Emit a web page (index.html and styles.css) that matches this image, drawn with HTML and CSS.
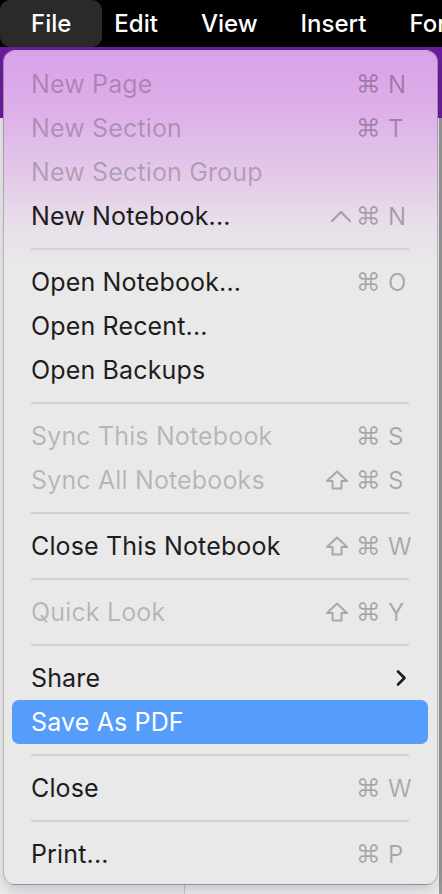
FILE: index.html
```html
<!DOCTYPE html>
<html lang="en">
<head>
  <meta charset="UTF-8" />
  <meta name="viewport" content="width=device-width, initial-scale=1.0" />
  <title>File menu</title>
  <link rel="stylesheet" href="styles.css">
</head>
<body>
  <nav class="menubar">
    <span class="menubar-item active">File</span>
    <span class="menubar-item">Edit</span>
    <span class="menubar-item">View</span>
    <span class="menubar-item">Insert</span>
    <span class="menubar-item">Format</span>
  </nav>

  <main class="app">
    <div class="ribbon"></div>
    <div class="content">
      <div class="pane-left"></div>
      <div class="pane-right"></div>
    </div>

    <ul class="menu">
      <li class="item disabled"><span class="label">New Page</span><span class="keys"><span class="mods">⌘</span><span class="key">N</span></span></li>
      <li class="item disabled"><span class="label">New Section</span><span class="keys"><span class="mods">⌘</span><span class="key">T</span></span></li>
      <li class="item disabled"><span class="label">New Section Group</span></li>
      <li class="item"><span class="label">New Notebook...</span><span class="keys"><span class="mods">
        <svg class="ctrl" width="22" height="14" viewBox="0 0 22 14"><path d="M2 12 L11 3 L20 12" fill="none" stroke="currentColor" stroke-width="2.2" stroke-linecap="round" stroke-linejoin="round"/></svg>⌘</span><span class="key">N</span></span></li>
      <li class="sep"></li>
      <li class="item"><span class="label">Open Notebook...</span><span class="keys"><span class="mods">⌘</span><span class="key">O</span></span></li>
      <li class="item"><span class="label">Open Recent...</span></li>
      <li class="item"><span class="label">Open Backups</span></li>
      <li class="sep"></li>
      <li class="item disabled"><span class="label">Sync This Notebook</span><span class="keys"><span class="mods">⌘</span><span class="key">S</span></span></li>
      <li class="item disabled"><span class="label">Sync All Notebooks</span><span class="keys"><span class="mods">
        <svg class="shift" width="22" height="20" viewBox="0 0 22 20"><path d="M11 1.5 L21 11 H15.5 V18.5 H6.5 V11 H1 Z" fill="none" stroke="currentColor" stroke-width="2" stroke-linejoin="round"/></svg>⌘</span><span class="key">S</span></span></li>
      <li class="sep"></li>
      <li class="item"><span class="label">Close This Notebook</span><span class="keys"><span class="mods">
        <svg class="shift" width="22" height="20" viewBox="0 0 22 20"><path d="M11 1.5 L21 11 H15.5 V18.5 H6.5 V11 H1 Z" fill="none" stroke="currentColor" stroke-width="2" stroke-linejoin="round"/></svg>⌘</span><span class="key">W</span></span></li>
      <li class="sep"></li>
      <li class="item disabled"><span class="label">Quick Look</span><span class="keys"><span class="mods">
        <svg class="shift" width="22" height="20" viewBox="0 0 22 20"><path d="M11 1.5 L21 11 H15.5 V18.5 H6.5 V11 H1 Z" fill="none" stroke="currentColor" stroke-width="2" stroke-linejoin="round"/></svg>⌘</span><span class="key">Y</span></span></li>
      <li class="sep"></li>
      <li class="item"><span class="label">Share</span>
        <svg class="chevron" width="14" height="18" viewBox="0 0 14 18"><path d="M4 2.5 L10.5 9 L4 15.5" fill="none" stroke="#1d1d1d" stroke-width="2.6" stroke-linecap="round" stroke-linejoin="round"/></svg>
      </li>
      <li class="item selected"><span class="label">Save As PDF</span></li>
      <li class="sep"></li>
      <li class="item"><span class="label">Close</span><span class="keys"><span class="mods">⌘</span><span class="key">W</span></span></li>
      <li class="sep"></li>
      <li class="item"><span class="label">Print...</span><span class="keys"><span class="mods">⌘</span><span class="key">P</span></span></li>
    </ul>
  </main>
</body>
</html>
```

FILE: styles.css
```css
* {
  box-sizing: border-box;
}

body {
  margin: 0;
  height: 894px;
  overflow: hidden;
  font-family: Inter, 'Noto Sans', sans-serif;
  background-color: #ececec;
}

/* top menu bar */
.menubar {
  height: 47px;
  background-color: #000;
  display: flex;
  align-items: stretch;
  white-space: nowrap;
  overflow: hidden;
}

.menubar-item {
  display: flex;
  align-items: center;
  padding: 0 21.5px;
  color: #fff;
  font-size: 24px;
  font-weight: 500;
}

.menubar-item.active {
  padding: 0 31px;
  margin-right: -9.5px;
  background-color: #2a2a2a;
  border-radius: 10px;
}

/* app behind the menu */
.app {
  position: relative;
  height: 847px;
}

.ribbon {
  height: 71px;
  background-color: #6c1d9e;
}

.content {
  display: flex;
  height: 776px;
}

.pane-left {
  width: 185px;
  border-right: 1px solid #c9c9c9;
  background-color: #efefef;
}

.pane-right {
  flex: 1;
  border-right: 3px solid #9a9a9a;
  background-color: #f1f1f1;
}

/* dropdown menu */
.menu {
  position: absolute;
  top: 3px;
  left: 3px;
  width: 435px;
  margin: 0;
  padding: 11px 0 8px;
  list-style: none;
  border-radius: 12px;
  border: 1px solid rgba(0, 0, 0, 0.22);
  background: linear-gradient(180deg, #daa1ea 0px, #ddb0e8 60px, #e3cae8 125px, #e8dfea 175px, #e9e9e9 220px);
  box-shadow: 0 6px 16px rgba(0, 0, 0, 0.18);
}

.item {
  display: flex;
  align-items: center;
  height: 44px;
  margin: 0 9px 0 8px;
  padding: 0 17px 0 19px;
  border-radius: 7px;
  font-size: 25px;
  letter-spacing: 0.15px;
  color: #1d1d1d;
}

.item .label {
  flex: 1;
}

.item.disabled {
  color: rgba(0, 0, 0, 0.23);
}

.item.selected {
  background-color: #569cfb;
  color: #fff;
}

.keys {
  display: flex;
  align-items: center;
  color: rgba(0, 0, 0, 0.28);
}

.mods {
  display: flex;
  align-items: center;
  gap: 3px;
  font-family: 'DejaVu Sans', sans-serif;
  font-size: 25px;
}

.ctrl {
  margin-right: 1px;
}

.shift {
  margin-right: 5px;
}

.key {
  width: 30px;
  padding-left: 7px;
  font-size: 24px;
}

.chevron {
  margin-right: 3px;
}

.sep {
  height: 2px;
  margin: 10px 28px 10px 27px;
  background-color: #d2d2d2;
}
```
